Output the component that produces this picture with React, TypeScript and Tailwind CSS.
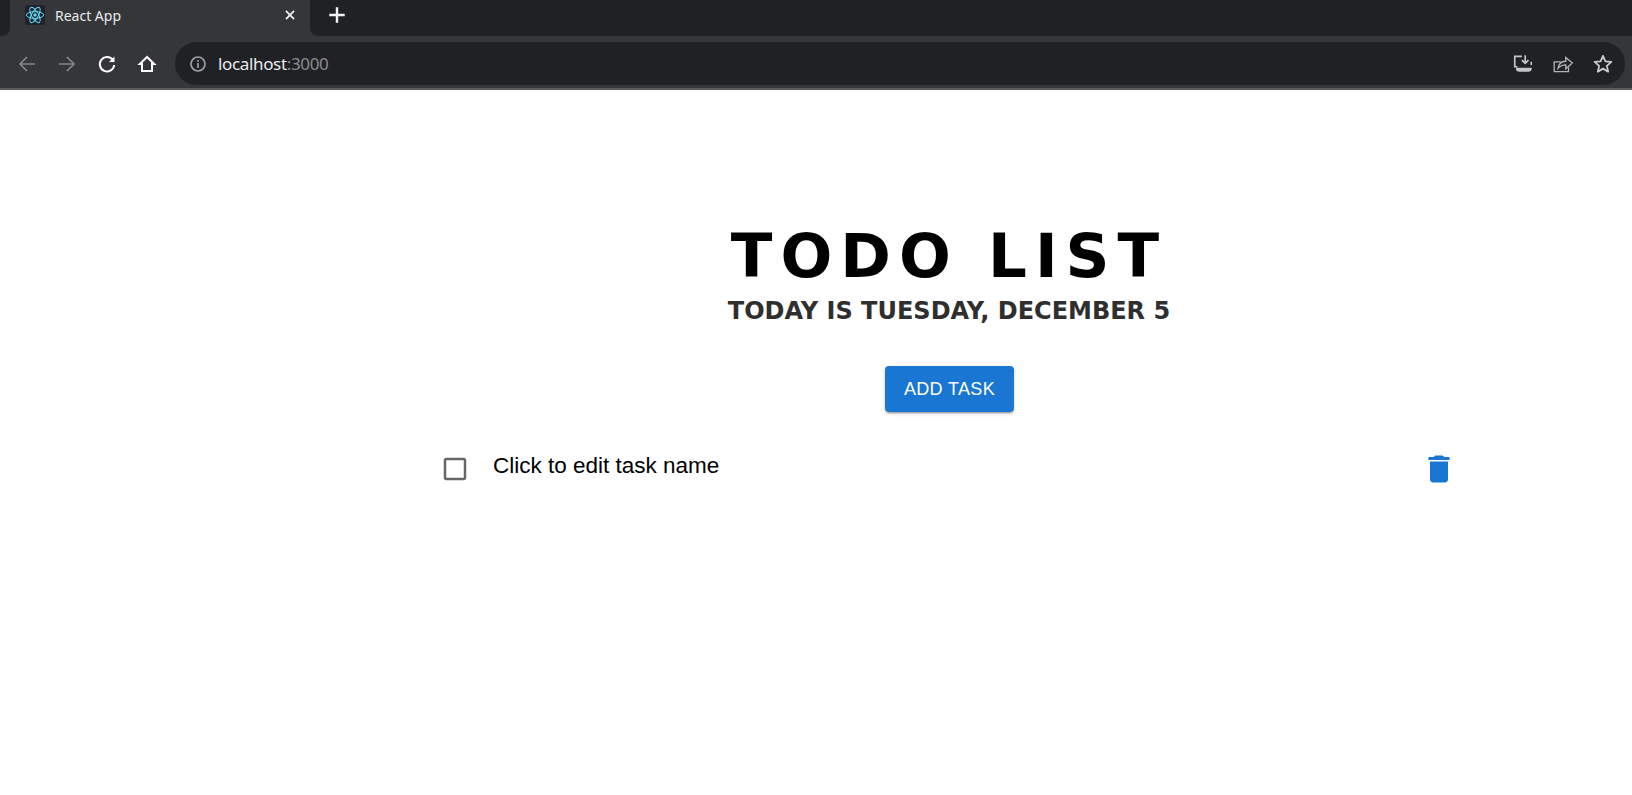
import React from "react";

function ReactIcon() {
  return (
    <svg width="20" height="20" viewBox="0 0 20 20" className="rounded-[2px] bg-[#20232a] shrink-0">
      <g fill="none" stroke="#61dafb" strokeWidth="1">
        <ellipse cx="10" cy="10" rx="8.6" ry="3.4" />
        <ellipse cx="10" cy="10" rx="8.6" ry="3.4" transform="rotate(60 10 10)" />
        <ellipse cx="10" cy="10" rx="8.6" ry="3.4" transform="rotate(120 10 10)" />
      </g>
      <circle cx="10" cy="10" r="1.7" fill="#61dafb" />
    </svg>
  );
}

function Stroke({ w = 20, children, color = "#ffffff", sw = 2 }: { w?: number; children: React.ReactNode; color?: string; sw?: number }) {
  return (
    <svg width={w} height={w} viewBox="0 0 20 20" fill="none" stroke={color} strokeWidth={sw} className="shrink-0">
      {children}
    </svg>
  );
}

export default function App() {
  return (
    <div className="min-h-[795px] bg-white font-['Liberation_Sans',sans-serif]">
      <div className="bg-[#35363a] border-b-2 border-[#5b5c5f]">
        <div className="flex h-9 bg-[#35363a]">
          <div className="w-2.5 bg-[#202124] rounded-br-[8px]" />
          <div className="w-[300px] flex items-center pl-[15px] pr-[11px] pb-[6px] rounded-t-[8px]">
            <ReactIcon />
            <span className="ml-[10px] flex-1 text-[14px] text-[#e8eaed] font-['Noto_Sans',sans-serif]">React App</span>
            <Stroke w={18}>
              <path d="M5.5 5.5 14.5 14.5M14.5 5.5 5.5 14.5" stroke="#f1f3f4" />
            </Stroke>
          </div>
          <div className="flex-1 flex items-center bg-[#202124] rounded-bl-[8px] pl-[16px] pb-[6px]">
            <Stroke w={22}>
              <path d="M10 3v14M3 10h14" stroke="#f1f3f4" strokeWidth="2.2" />
            </Stroke>
          </div>
        </div>
        <div className="flex items-center h-[52px] pt-[6px] pb-[3px] pl-[17px] pr-[7px]">
          <Stroke w={20} color="#85868a">
            <path d="M18 10H3M10 3l-7 7 7 7" strokeWidth="1.7" />
          </Stroke>
          <div className="ml-5">
            <Stroke w={20} color="#85868a">
              <path d="M2 10h15M10 3l7 7-7 7" strokeWidth="1.7" />
            </Stroke>
          </div>
          <div className="ml-5">
            <Stroke w={20}>
              <path d="M16 6.2A7.2 7.2 0 1 0 17.2 11" strokeWidth="2" />
              <path d="M17.5 2.5v5.5H12z" fill="#fff" stroke="none" />
            </Stroke>
          </div>
          <div className="ml-5">
            <Stroke w={20}>
              <path d="M10 3 2.8 10H5v7h10v-7h2.2z" strokeWidth="2" strokeLinejoin="miter" />
            </Stroke>
          </div>
          <div className="ml-[18px] flex-1 h-[43px] rounded-full bg-[#202124] flex items-center pl-[14px] pr-[11px]">
            <svg width="18" height="18" viewBox="0 0 18 18" className="shrink-0">
              <circle cx="9" cy="9" r="7" fill="none" stroke="#9aa0a6" strokeWidth="1.7" />
              <path d="M9 8v5M9 5v1.7" stroke="#9aa0a6" strokeWidth="1.7" />
            </svg>
            <span className="ml-[11px] flex-1 text-[17px] text-[#e8eaed] font-['Noto_Sans',sans-serif] tracking-[-0.35px]">
              localhost<span className="text-[#8a8c8f]">:3000</span>
            </span>
            <Stroke w={22} color="#c4c7c9" sw={1.5}>
              <path d="M9 3H2.5v9.5H5M12 2v7M9 6.5 12 9.5l3-3" />
              <path d="M3.5 13.5h14.5c0 3-1.5 3.5-3 3.5H6.5c-1.5 0-3-.5-3-3.5z" fill="#c4c7c9" stroke="none" />
              <path d="M17.5 8v3" />
            </Stroke>
            <div className="ml-[18px]">
              <Stroke w={22} color="#b0b3b5" sw={1.2}>
                <path d="M8 8H2v9h13v-4" />
                <path d="M5.5 14c.5-4 3-6.5 7-6.5V4l6 5.2-6 5.2v-3.6c-3 0-5 1-7 3.2z" />
              </Stroke>
            </div>
            <div className="ml-[18px]">
              <Stroke w={22} color="#c9ccd0" sw={1.6}>
                <path d="M10 2.6 12.2 7.6 17.6 8.1 13.5 11.7 14.7 17 10 14.2 5.3 17 6.5 11.7 2.4 8.1 7.8 7.6z" strokeLinejoin="round" />
              </Stroke>
            </div>
          </div>
        </div>
      </div>

      <main className="pl-[266px] pt-[131px] flex flex-col items-center">
        <h1 className="font-['DejaVu_Sans',sans-serif] font-bold text-[61px] leading-[70px] tracking-[8px] text-black whitespace-nowrap">
          TODO LIST
        </h1>
        <h2 className="mt-[6px] font-['DejaVu_Sans',sans-serif] font-bold text-[24px] leading-[28px] text-[#2f2f2f] whitespace-nowrap">
          TODAY IS TUESDAY, DECEMBER 5
        </h2>
        <button className="mt-[41px] w-[129px] h-[46px] pl-[1px] rounded-[4px] bg-[#1976d2] text-white text-[18px] tracking-[0.35px] shadow-[0_3px_1px_-2px_rgba(0,0,0,0.2),0_2px_2px_0_rgba(0,0,0,0.14),0_1px_5px_0_rgba(0,0,0,0.12)]">
          ADD TASK
        </button>
        <div className="mt-[39px] w-[1020px] flex items-start pr-[2px]">
          <svg width="30" height="30" viewBox="0 0 24 24" fill="rgba(0,0,0,0.6)" className="shrink-0 ml-[1px] mt-[3px]">
            <path d="M19 5v14H5V5h14m0-2H5c-1.1 0-2 .9-2 2v14c0 1.1.9 2 2 2h14c1.1 0 2-.9 2-2V5c0-1.1-.9-2-2-2z" />
          </svg>
          <span className="ml-[23px] mt-[2px] flex-1 text-[22.5px] leading-[26px] text-black">Click to edit task name</span>
          <svg width="36" height="36" viewBox="0 0 24 24" fill="#1976d2" className="shrink-0">
            <path d="M6 19c0 1.1.9 2 2 2h8c1.1 0 2-.9 2-2V7H6v12zM19 4h-3.5l-1-1h-5l-1 1H5v2h14V4z" />
          </svg>
        </div>
      </main>
    </div>
  );
}
